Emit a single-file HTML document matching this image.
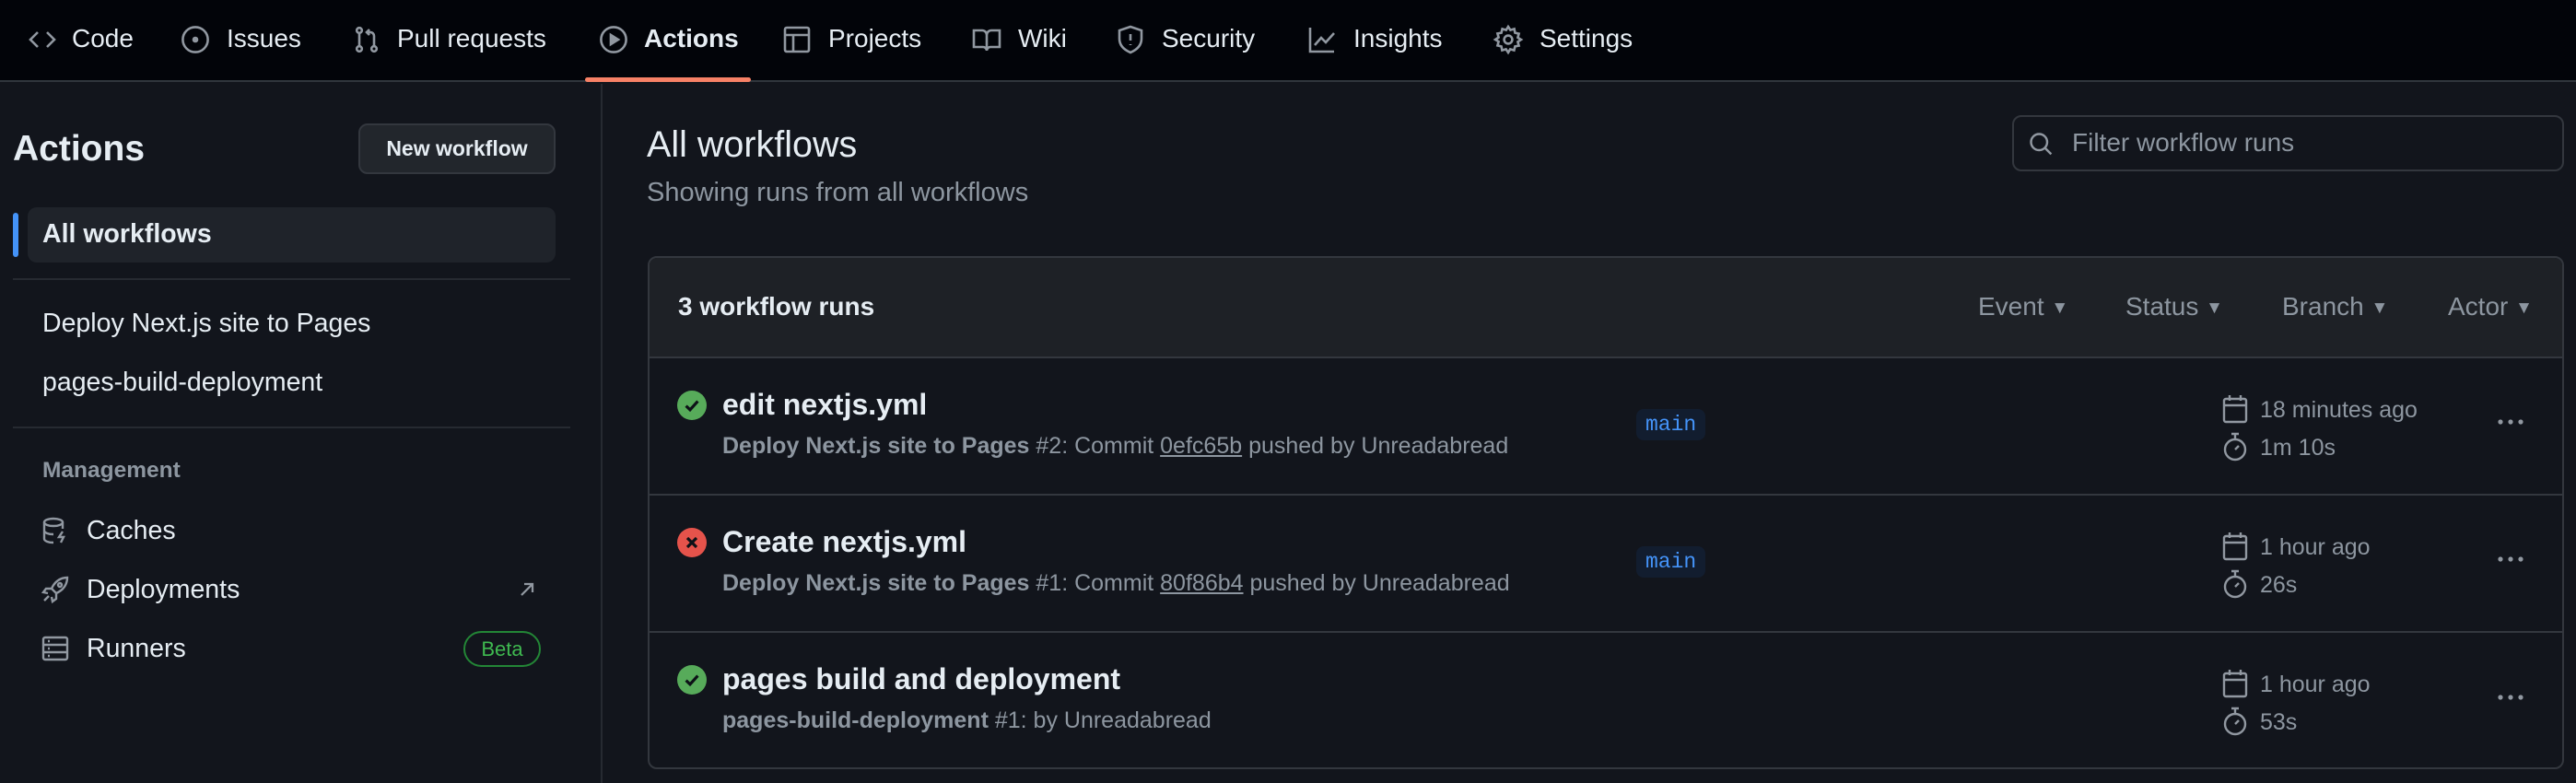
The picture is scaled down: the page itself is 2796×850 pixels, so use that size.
<!DOCTYPE html>
<html><head><meta charset="utf-8"><style>
*{margin:0;padding:0;box-sizing:border-box}
body{width:2796px;height:850px;background:#12151c;font-family:"Liberation Sans",sans-serif;color:#e6edf3;position:relative;overflow:hidden}
.a{position:absolute;white-space:nowrap}
.nav{position:absolute;left:0;top:0;width:2796px;height:89px;background:#020409;border-bottom:2px solid #30363d}
.ni{position:absolute;top:26px;font-size:28px;color:#e6edf3}
.ic{position:absolute;top:27px}
svg{overflow:visible}
.g{color:#8d96a0}
.row{position:absolute;left:703px;width:2080px}
.badge{position:absolute;background:#121d2f;color:#4493f8;font-family:"Liberation Mono",monospace;font-size:23px;border-radius:8px;padding:4px 10px}
.car{font-size:19px;vertical-align:2px}
</style></head><body>
<div class="nav">
<svg class="ic" style="left:30px" width="32" height="32" viewBox="0 0 16 16" fill="none" stroke="#9198a1" stroke-width="1.3"><path d="M5.5 4 1.5 8l4 4M10.5 4l4 4-4 4"/></svg>
<div class="ni" style="left:78px">Code</div>
<svg class="ic" style="left:196px" width="32" height="32" viewBox="0 0 16 16" fill="none" stroke="#9198a1" stroke-width="1.3"><circle cx="8" cy="8" r="6.8"/><circle cx="8" cy="8" r="1" fill="#9198a1"/></svg>
<div class="ni" style="left:246px">Issues</div>
<svg class="ic" style="left:382px" width="32" height="32" viewBox="0 0 16 16" fill="none" stroke="#9198a1" stroke-width="1.3"><circle cx="4" cy="3" r="1.4"/><circle cx="4" cy="13" r="1.4"/><circle cx="12" cy="13" r="1.4"/><path d="M4 4.5v7M12 11.5V6a2 2 0 0 0-2-2H8m1.5-1.5L8 4l1.5 1.5"/></svg>
<div class="ni" style="left:431px">Pull requests</div>
<svg class="ic" style="left:650px" width="32" height="32" viewBox="0 0 16 16" fill="none" stroke="#9198a1" stroke-width="1.3"><circle cx="8" cy="8" r="6.8"/><path d="M6.5 5.5v5l4-2.5z" fill="#9198a1"/></svg>
<div class="ni" style="left:699px;font-weight:bold">Actions</div>
<div class="a" style="left:635px;top:84px;width:180px;height:5px;background:#f78166;border-radius:3px"></div>
<svg class="ic" style="left:849px" width="32" height="32" viewBox="0 0 16 16" fill="none" stroke="#9198a1" stroke-width="1.3"><rect x="1.5" y="1.5" width="13" height="13" rx="1"/><path d="M1.5 5.5h13M6 5.5v9"/></svg>
<div class="ni" style="left:899px">Projects</div>
<svg class="ic" style="left:1055px" width="32" height="32" viewBox="0 0 16 16" fill="none" stroke="#9198a1" stroke-width="1.3"><path d="M1 3h4.5A2.5 2.5 0 0 1 8 5.5V14a2 2 0 0 0-2-2H1zM15 3h-4.5A2.5 2.5 0 0 0 8 5.5V14a2 2 0 0 1 2-2h5z"/></svg>
<div class="ni" style="left:1105px">Wiki</div>
<svg class="ic" style="left:1211px" width="32" height="32" viewBox="0 0 16 16" fill="none" stroke="#9198a1" stroke-width="1.3"><path d="M8 1 2 3v4.5c0 3.5 2.5 6 6 7.5 3.5-1.5 6-4 6-7.5V3z"/><path d="M8 5v3.5M8 10.5v.5"/></svg>
<div class="ni" style="left:1261px">Security</div>
<svg class="ic" style="left:1419px" width="32" height="32" viewBox="0 0 16 16" fill="none" stroke="#9198a1" stroke-width="1.3"><path d="M1.5 1.5v13h13M4 11l3.5-4 2.5 2.5 4.5-5"/></svg>
<div class="ni" style="left:1469px">Insights</div>
<svg class="ic" style="left:1621px" width="32" height="32" viewBox="0 0 16 16" fill="none" stroke="#9198a1" stroke-width="1.3"><circle cx="8" cy="8" r="2.2"/><path d="M8 1l1.2 1.8 2.1-.6.4 2.1 2.1.5-.6 2.1L15 8l-1.8 1.2.6 2.1-2.1.4-.5 2.1-2.1-.6L8 15l-1.2-1.8-2.1.6-.4-2.1-2.1-.5.6-2.1L1 8l1.8-1.2-.6-2.1 2.1-.4.5-2.1 2.1.6z"/></svg>
<div class="ni" style="left:1671px">Settings</div>
</div>

<div class="a" style="left:652px;top:91px;width:2px;height:759px;background:#262a31"></div>
<div class="a" style="left:14px;top:140px;font-size:39px;font-weight:bold">Actions</div>
<div class="a" style="left:389px;top:134px;width:214px;height:55px;background:#22262c;border:2px solid #33373e;border-radius:10px;font-size:23px;font-weight:bold;text-align:center;line-height:51px">New workflow</div>
<div class="a" style="left:30px;top:225px;width:573px;height:60px;background:#1f232a;border-radius:10px"></div>
<div class="a" style="left:14px;top:231px;width:6px;height:48px;background:#4493f8;border-radius:3px"></div>
<div class="a" style="left:46px;top:238px;font-size:28.5px;font-weight:bold">All workflows</div>
<div class="a" style="left:14px;top:302px;width:605px;height:2px;background:#262a31"></div>
<div class="a" style="left:46px;top:335px;font-size:28.5px">Deploy Next.js site to Pages</div>
<div class="a" style="left:46px;top:399px;font-size:28.5px">pages-build-deployment</div>
<div class="a" style="left:14px;top:463px;width:605px;height:2px;background:#262a31"></div>
<div class="a g" style="left:46px;top:497px;font-size:24.5px;font-weight:bold">Management</div>
<svg class="a" style="left:44px;top:560px" width="32" height="32" viewBox="0 0 16 16" fill="none" stroke="#9198a1" stroke-width="1.2"><ellipse cx="7" cy="3.5" rx="5" ry="2"/><path d="M2 3.5v9c0 1.1 2.2 2 5 2M12 3.5V7M2 8c0 1.1 2.2 2 5 2"/><path d="M12 8.5l-2 3h2.5l-1.5 3" /></svg>
<div class="a" style="left:94px;top:560px;font-size:28.5px">Caches</div>
<svg class="a" style="left:44px;top:624px" width="32" height="32" viewBox="0 0 16 16" fill="none" stroke="#9198a1" stroke-width="1.2"><path d="M14.5 1.5c-4 0-7 2.5-8.5 6l2.5 2.5c3.5-1.5 6-4.5 6-8.5zM6 7.5H3L1.5 9.5 4 10M8.5 10v3l-2 1.5L6 12M4.5 11.5 2 14"/><circle cx="10.5" cy="5.5" r="1"/></svg>
<div class="a" style="left:94px;top:624px;font-size:28.5px">Deployments</div>
<svg class="a" style="left:560px;top:628px" width="24" height="24" viewBox="0 0 16 16" fill="none" stroke="#9198a1" stroke-width="1.5"><path d="M4 12 12 4M6 4h6v6"/></svg>
<svg class="a" style="left:44px;top:688px" width="32" height="32" viewBox="0 0 16 16" fill="none" stroke="#9198a1" stroke-width="1.2"><rect x="1.5" y="2" width="13" height="12" rx="1"/><path d="M1.5 6h13M1.5 10h13M4 4h1M4 8h1M4 12h1"/></svg>
<div class="a" style="left:94px;top:688px;font-size:28.5px">Runners</div>
<div class="a" style="left:503px;top:685px;width:84px;height:39px;border:2px solid #238636;border-radius:20px;color:#3fb950;font-size:22px;text-align:center;line-height:35px">Beta</div>

<div class="a" style="left:702px;top:135px;font-size:39.5px">All workflows</div>
<div class="a g" style="left:702px;top:193px;font-size:29px">Showing runs from all workflows</div>
<div class="a" style="left:2184px;top:125px;width:599px;height:61px;border:2px solid #33373e;border-radius:10px;background:#12151c"></div>
<svg class="a" style="left:2201px;top:142px" width="28" height="28" viewBox="0 0 16 16" fill="none" stroke="#9198a1" stroke-width="1.4"><circle cx="7" cy="7" r="5"/><path d="m10.5 10.5 4 4"/></svg>
<div class="a g" style="left:2249px;top:139px;font-size:28px">Filter workflow runs</div>

<div class="a" style="left:703px;top:278px;width:2080px;height:557px;border:2px solid #33373e;border-radius:10px;overflow:hidden">
<div style="height:109px;background:#1e2126;border-bottom:2px solid #33373e"></div>
</div>
<div class="a" style="left:736px;top:317px;font-size:28px;font-weight:bold">3 workflow runs</div>
<div class="a g" style="left:2147px;top:317px;font-size:28px">Event <span class="car">▼</span></div>
<div class="a g" style="left:2307px;top:317px;font-size:28px">Status <span class="car">▼</span></div>
<div class="a g" style="left:2477px;top:317px;font-size:28px">Branch <span class="car">▼</span></div>
<div class="a g" style="left:2657px;top:317px;font-size:28px">Actor <span class="car">▼</span></div>

<div class="row" style="top:536px;height:2px;background:#33373e"></div>
<div class="row" style="top:685px;height:2px;background:#33373e"></div>

<svg class="a" style="left:735px;top:424px" width="32" height="32" viewBox="0 0 16 16"><circle cx="8" cy="8" r="8" fill="#57ab5a"/><path d="M4.8 8.3 7 10.4l4.2-4.6" fill="none" stroke="#0d1117" stroke-width="1.6"/></svg>
<div class="a" style="left:784px;top:421px;font-size:32px;font-weight:bold">edit nextjs.yml</div>
<div class="a g" style="left:784px;top:470px;font-size:25px"><b>Deploy Next.js site to Pages</b> #2: Commit <u>0efc65b</u> pushed by Unreadabread</div>
<div class="badge" style="left:1776px;top:444px">main</div>

<svg class="a" style="left:735px;top:573px" width="32" height="32" viewBox="0 0 16 16"><circle cx="8" cy="8" r="8" fill="#e5534b"/><path d="M5.5 5.5l5 5M10.5 5.5l-5 5" fill="none" stroke="#0d1117" stroke-width="1.6"/></svg>
<div class="a" style="left:784px;top:570px;font-size:32px;font-weight:bold">Create nextjs.yml</div>
<div class="a g" style="left:784px;top:619px;font-size:25px"><b>Deploy Next.js site to Pages</b> #1: Commit <u>80f86b4</u> pushed by Unreadabread</div>
<div class="badge" style="left:1776px;top:593px">main</div>

<svg class="a" style="left:735px;top:722px" width="32" height="32" viewBox="0 0 16 16"><circle cx="8" cy="8" r="8" fill="#57ab5a"/><path d="M4.8 8.3 7 10.4l4.2-4.6" fill="none" stroke="#0d1117" stroke-width="1.6"/></svg>
<div class="a" style="left:784px;top:719px;font-size:32px;font-weight:bold">pages build and deployment</div>
<div class="a g" style="left:784px;top:768px;font-size:25px"><b>pages-build-deployment</b> #1: by Unreadabread</div>

<svg class="a" style="left:2412px;top:428px" width="28" height="32" viewBox="0 0 14 16" fill="none" stroke="#9198a1" stroke-width="1.2"><rect x="1" y="2.5" width="12" height="12.5" rx="1"/><path d="M1 6h12M4 0.5v3M10 0.5v3"/></svg>
<div class="a g" style="left:2453px;top:431px;font-size:25px">18 minutes ago</div>
<svg class="a" style="left:2412px;top:469px" width="28" height="32" viewBox="0 0 14 16" fill="none" stroke="#9198a1" stroke-width="1.2"><circle cx="7" cy="9.5" r="5.5"/><path d="M5 1h4M7 1v3M7 9.5l2-2"/></svg>
<div class="a g" style="left:2453px;top:472px;font-size:25px">1m 10s</div>
<svg class="a" style="left:2412px;top:577px" width="28" height="32" viewBox="0 0 14 16" fill="none" stroke="#9198a1" stroke-width="1.2"><rect x="1" y="2.5" width="12" height="12.5" rx="1"/><path d="M1 6h12M4 0.5v3M10 0.5v3"/></svg>
<div class="a g" style="left:2453px;top:580px;font-size:25px">1 hour ago</div>
<svg class="a" style="left:2412px;top:618px" width="28" height="32" viewBox="0 0 14 16" fill="none" stroke="#9198a1" stroke-width="1.2"><circle cx="7" cy="9.5" r="5.5"/><path d="M5 1h4M7 1v3M7 9.5l2-2"/></svg>
<div class="a g" style="left:2453px;top:621px;font-size:25px">26s</div>
<svg class="a" style="left:2412px;top:726px" width="28" height="32" viewBox="0 0 14 16" fill="none" stroke="#9198a1" stroke-width="1.2"><rect x="1" y="2.5" width="12" height="12.5" rx="1"/><path d="M1 6h12M4 0.5v3M10 0.5v3"/></svg>
<div class="a g" style="left:2453px;top:729px;font-size:25px">1 hour ago</div>
<svg class="a" style="left:2412px;top:767px" width="28" height="32" viewBox="0 0 14 16" fill="none" stroke="#9198a1" stroke-width="1.2"><circle cx="7" cy="9.5" r="5.5"/><path d="M5 1h4M7 1v3M7 9.5l2-2"/></svg>
<div class="a g" style="left:2453px;top:770px;font-size:25px">53s</div>

<svg class="a" style="left:2710px;top:454px" width="30" height="8"><circle cx="4" cy="4" r="2.6" fill="#9198a1"/><circle cx="15" cy="4" r="2.6" fill="#9198a1"/><circle cx="26" cy="4" r="2.6" fill="#9198a1"/></svg>
<svg class="a" style="left:2710px;top:603px" width="30" height="8"><circle cx="4" cy="4" r="2.6" fill="#9198a1"/><circle cx="15" cy="4" r="2.6" fill="#9198a1"/><circle cx="26" cy="4" r="2.6" fill="#9198a1"/></svg>
<svg class="a" style="left:2710px;top:753px" width="30" height="8"><circle cx="4" cy="4" r="2.6" fill="#9198a1"/><circle cx="15" cy="4" r="2.6" fill="#9198a1"/><circle cx="26" cy="4" r="2.6" fill="#9198a1"/></svg>
</body></html>
